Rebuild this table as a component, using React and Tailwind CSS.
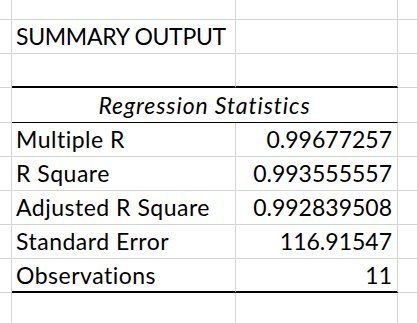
const rows = [
  { label: 'Multiple R', value: '0.99677257' },
  { label: 'R Square', value: '0.993555557' },
  { label: 'Adjusted R Square', value: '0.992839508' },
  { label: 'Standard Error', value: '116.91547' },
  { label: 'Observations', value: '11' },
];

const grid = 'border-[#d4d4d4]';

export default function App() {
  return (
    <div
      className="w-[417px] h-[323px] overflow-hidden bg-white text-black text-[23px] leading-none"
      style={{ fontFamily: 'Lato, "Open Sans", sans-serif' }}
    >
      {/* top empty row */}
      <div className="flex h-[20px]">
        <div className={`w-[12px] shrink-0 border-r border-b ${grid}`} />
        <div className={`w-[224px] shrink-0 border-r border-b ${grid}`} />
        <div className={`w-[162px] shrink-0 border-r border-b ${grid}`} />
        <div className={`flex-1 border-b ${grid}`} />
      </div>

      {/* title row */}
      <div className="flex h-[34px]">
        <div className={`w-[12px] shrink-0 border-r border-b ${grid}`} />
        <div className={`w-[224px] shrink-0 border-r border-b ${grid} relative`}>
          <span className="absolute left-[4px] bottom-[5px] whitespace-nowrap tracking-[-0.3px]">SUMMARY OUTPUT</span>
        </div>
        <div className={`w-[162px] shrink-0 border-r border-b ${grid}`} />
        <div className={`flex-1 border-b ${grid}`} />
      </div>

      {/* empty row above table */}
      <div className="flex h-[34px]">
        <div className={`w-[12px] shrink-0 border-r border-b ${grid}`} />
        <div className={`w-[224px] shrink-0 border-r ${grid} border-b-2 border-b-black`} />
        <div className={`w-[162px] shrink-0 border-r ${grid} border-b-2 border-b-black`} />
        <div className={`flex-1 border-b ${grid}`} />
      </div>

      {/* header row */}
      <div className="flex h-[35px]">
        <div className={`w-[12px] shrink-0 border-r border-b ${grid}`} />
        <div className={`w-[386px] shrink-0 border-r ${grid} border-b border-b-black flex items-end justify-center pb-[5px]`}>
          <span className="italic whitespace-nowrap tracking-[0.9px]">Regression Statistics</span>
        </div>
        <div className={`flex-1 border-b ${grid}`} />
      </div>

      {rows.map((row, i) => {
        const last = i === rows.length - 1;
        const bottom = last ? 'border-b-2 border-b-black' : 'border-b';
        return (
          <div key={row.label} className="flex h-[34px]">
            <div className={`w-[12px] shrink-0 border-r border-b ${grid}`} />
            <div className={`w-[224px] shrink-0 border-r ${grid} ${bottom} flex items-end pl-[4px] ${last ? 'pb-[4px]' : 'pb-[5px]'}`}>
              <span className="whitespace-nowrap tracking-[0.5px]">{row.label}</span>
            </div>
            <div className={`w-[162px] shrink-0 border-r ${grid} ${bottom} flex items-end justify-end pr-[5px] ${last ? 'pb-[4px]' : 'pb-[5px]'}`}>
              <span className="whitespace-nowrap">{row.value}</span>
            </div>
            <div className={`flex-1 border-b ${grid}`} />
          </div>
        );
      })}

      {/* trailing empty row */}
      <div className="flex h-[34px]">
        <div className={`w-[12px] shrink-0 border-r border-b ${grid}`} />
        <div className={`w-[224px] shrink-0 border-r border-b ${grid}`} />
        <div className={`w-[162px] shrink-0 border-r border-b ${grid}`} />
        <div className={`flex-1 border-b ${grid}`} />
      </div>
    </div>
  );
}
